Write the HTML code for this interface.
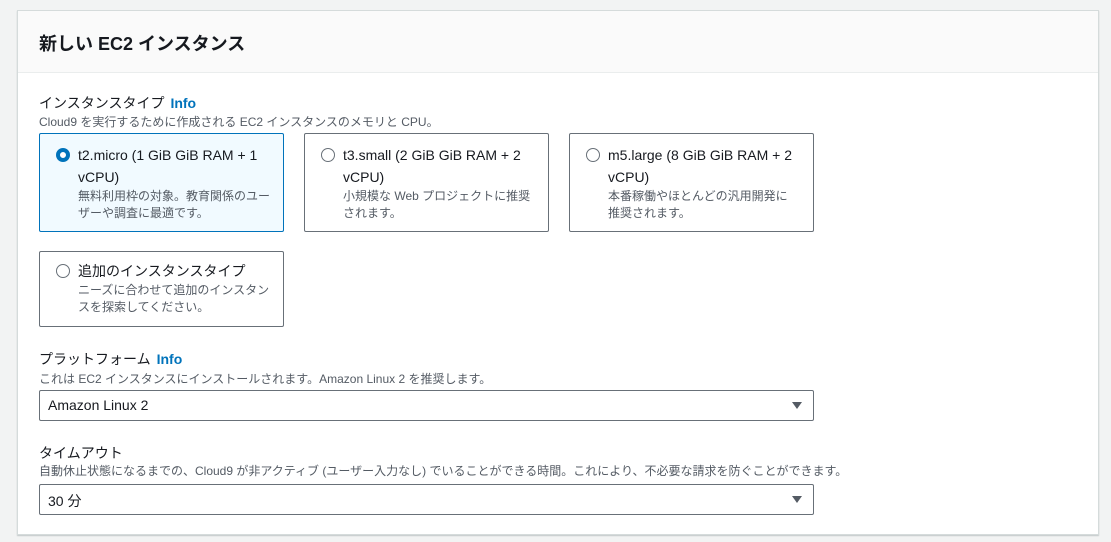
<!DOCTYPE html>
<html><head><meta charset="utf-8"><style>
*{box-sizing:border-box;margin:0;padding:0}
body{width:1111px;height:542px;background:#f2f3f3;font-family:"Liberation Sans","Noto Sans CJK JP",sans-serif;color:#16191f;position:relative;overflow:hidden}
.box{position:absolute;left:17px;top:10px;width:1082px;height:525px;background:#fff;border:1px solid #d5dbdb;box-shadow:0 1px 1px rgba(0,28,36,.2)}
.hd{position:absolute;left:0;top:0;right:0;height:62px;background:#fafafa;border-bottom:1px solid #eaeded}
.hd h2{position:absolute;left:21px;top:19px;font-size:18px;font-weight:bold}
.a{position:absolute}
.lbl{font-size:14px}
.lbl b{color:#0073bb;font-weight:bold;margin-left:6px}
.desc{font-size:12px;color:#545b64}
.card{position:absolute;border:1px solid #687078;border-radius:2px;background:#fff}
.card.sel{background:#f1faff;border-color:#0073bb}
.rad{position:absolute;left:16px;top:14px;width:14px;height:14px;border-radius:50%;border:1px solid #687078;background:#fff}
.sel .rad{border:4px solid #0073bb}
.ct{position:absolute;left:38px;top:10px;right:8px;font-size:14px;line-height:22px}
.cd{position:absolute;left:38px;right:8px;font-size:12px;line-height:17px;color:#545b64}
.selbox{position:absolute;left:39px;width:775px;height:31px;border:1px solid #687078;border-radius:2px;font-size:14px;padding:6px 8px}
.arr{position:absolute;right:11px;top:11px;width:0;height:0;border-left:5px solid transparent;border-right:5px solid transparent;border-top:7px solid #545b64}
</style></head><body>
<div class="box"><div class="hd"><h2>新しい EC2 インスタンス</h2></div></div>
<div class="a lbl" style="left:39px;top:93px">インスタンスタイプ<b>Info</b></div>
<div class="a desc" style="left:39px;top:113px">Cloud9 を実行するために作成される EC2 インスタンスのメモリと CPU。</div>

<div class="card sel" style="left:39px;top:133px;width:245px;height:99px"><div class="rad"></div>
<div class="ct">t2.micro (1 GiB GiB RAM + 1 vCPU)</div>
<div class="cd" style="top:54px">無料利用枠の対象。教育関係のユーザーや調査に最適です。</div></div>
<div class="card" style="left:304px;top:133px;width:245px;height:99px"><div class="rad"></div>
<div class="ct">t3.small (2 GiB GiB RAM + 2 vCPU)</div>
<div class="cd" style="top:54px">小規模な Web プロジェクトに推奨されます。</div></div>
<div class="card" style="left:569px;top:133px;width:245px;height:99px"><div class="rad"></div>
<div class="ct">m5.large (8 GiB GiB RAM + 2 vCPU)</div>
<div class="cd" style="top:54px;right:22px">本番稼働やほとんどの汎用開発に推奨されます。</div></div>
<div class="card" style="left:39px;top:251px;width:245px;height:76px"><div class="rad" style="top:12px"></div>
<div class="ct" style="top:8px">追加のインスタンスタイプ</div>
<div class="cd" style="top:30px">ニーズに合わせて追加のインスタンスを探索してください。</div></div>

<div class="a lbl" style="left:39px;top:349px">プラットフォーム<b>Info</b></div>
<div class="a desc" style="left:39px;top:370px">これは EC2 インスタンスにインストールされます。Amazon Linux 2 を推奨します。</div>
<div class="selbox" style="top:390px">Amazon Linux 2<div class="arr"></div></div>

<div class="a lbl" style="left:39px;top:443px">タイムアウト</div>
<div class="a desc" style="left:39px;top:462px">自動休止状態になるまでの、Cloud9 が非アクティブ (ユーザー入力なし) でいることができる時間。これにより、不必要な請求を防ぐことができます。</div>
<div class="selbox" style="top:484px">30 分<div class="arr"></div></div>
</body></html>
